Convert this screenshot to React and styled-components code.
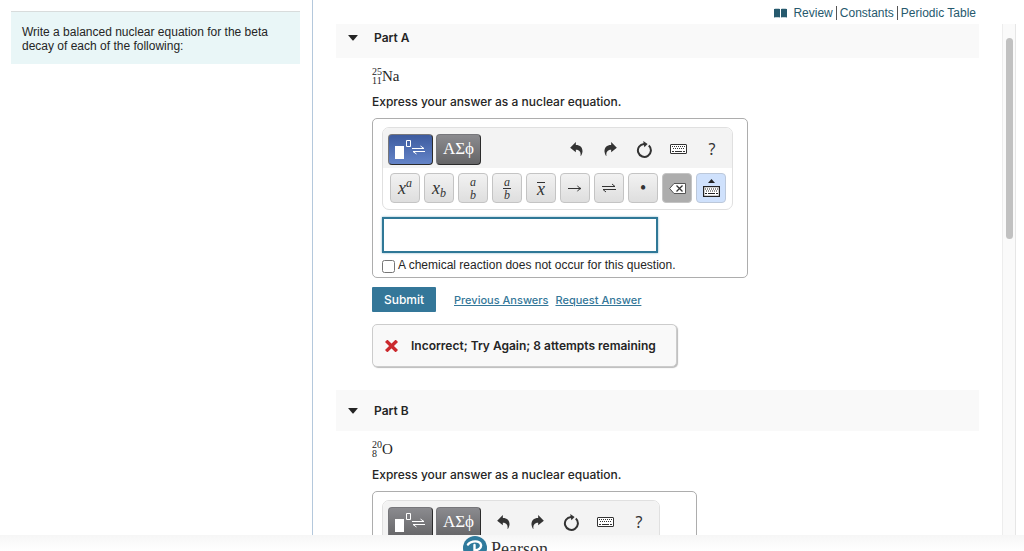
import React from 'react'
import styled, { createGlobalStyle } from 'styled-components'

const GlobalStyle = createGlobalStyle`
* {
  box-sizing: border-box;
}
body {
  margin: 0;
  background: #fff;
  color: #252525;
  font-family: Inter, "Liberation Sans", sans-serif;
  font-size: 12px;
  overflow: hidden;
}
`
const Page = styled.div`
display: flex;
flex-direction: column;
height: 100vh;
`
const Columns = styled.div`
display: flex;
flex: 1;
min-height: 0;
`
const Sidebar = styled.aside`
flex: 0 0 313px;
padding: 11px 12px 0 11px;
border-right: 1px solid #b4c8dc;
`
const Prompt = styled.p`
margin: 0;
padding: 13px 11px 11px;
border-top: 1px solid #d8dcdc;
background: #e9f6f7;
font-family: "Liberation Sans", Arial, sans-serif;
font-size: 12px;
line-height: 14px;
`
const Main = styled.main`
display: flex;
flex: 1;
flex-direction: column;
min-width: 0;
`
const Resources = styled.nav`
display: flex;
flex: 0 0 24px;
align-items: center;
justify-content: flex-end;
padding: 2px 48px 0 0;
font-family: "Liberation Sans", Arial, sans-serif;
font-size: 12px;

svg {
  margin-right: 6px;
}
`
const ResourceLink = styled.a`
color: #26596d;
line-height: 14px;
text-decoration: none;

& + & {
  margin-left: 3px;
  padding-left: 3px;
  border-left: 1px solid #555;
}
`
const ScrollArea = styled.div`
display: flex;
flex: 1;
min-height: 0;
overflow: hidden;
`
// the list is scrolled down by a few pixels
const Parts = styled.div`
flex: 1;
min-width: 0;
margin: -7px 23px 0;
`
const Track = styled.div`
flex: 0 0 14px;
margin-right: 8px;
padding: 14px 2px 0 3px;
border-left: 1px solid #ededed;
border-right: 1px solid #e6e6e6;
background: #fafafa;
`
const Thumb = styled.div`
width: 7px;
height: 201px;
border-radius: 4px;
background: #c1c1c1;
`
const Part = styled.section`
margin-bottom: 23px;
`
const PartHeader = styled.header`
display: flex;
align-items: center;
gap: 16px;
height: 41px;
padding-left: 12px;
background: #f9f9f9;
`
const PartTitle = styled.h2`
margin: 0;
font-size: 12px;
font-weight: 600;
`
const PartBody = styled.div`
padding: 9px 0 0 36px;
`
const Nuclide = styled.div`
display: flex;
align-items: center;
height: 18px;
font-family: "Liberation Serif", "Times New Roman", serif;
font-size: 15px;
`
const Numbers = styled.span`
display: flex;
flex-direction: column;
font-size: 10px;
line-height: 9px;
`
const Instruction = styled.p`
margin: 9px 0 8px;
font-size: 12px;
font-weight: 500;
line-height: 16px;
`
const AnswerBox = styled.div`
width: fit-content;
padding: 8px ${(p) => (p.$wide ? 14 : 36)}px 4px 9px;
border: 1px solid #adadad;
border-radius: 5px;
`
const Editor = styled.div`
width: fit-content;
border: 1px solid #e0e0e0;
border-radius: 7px;
overflow: hidden;
`
const Toolbar = styled.div`
display: flex;
align-items: center;
gap: 3px;
height: 40px;
padding: 2px 3px 0 5px;
background: #f3f3f3;
`
const Tools = styled.div`
display: flex;
margin-left: ${(p) => (p.$wide ? 75 : 2)}px;
`
const ToolButton = styled.button`
display: flex;
align-items: center;
justify-content: center;
width: 34px;
height: 30px;
padding: 0;
border: none;
background: none;
color: #333;
font-family: "Noto Sans", sans-serif;
font-size: 16px;
`
const ModeButton = styled.button`
display: flex;
align-items: center;
justify-content: center;
width: 45px;
height: 31px;
padding: 0;
border: 1px solid #444;
border-radius: 4px;
border-color: #77777b #2b2b2b #2b2b2b #77777b;
background: ${(p) => (p.$active ? 'linear-gradient(#3d5b9f, #6484c8)' : 'linear-gradient(#8b8b8f, #656567)')};
color: #fff;
font-family: "Liberation Serif", "Times New Roman", serif;
font-size: 17px;
`
const Keys = styled.div`
display: flex;
gap: 4px;
padding: 5px 6px 6px 7px;
`
const keyColors = {
  plain: 'linear-gradient(#f2f2f2, #dedede)',
  dark: '#adadad',
  blue: '#cfe1fc',
}
const Key = styled.button`
display: flex;
align-items: center;
justify-content: center;
width: 30px;
height: 30px;
padding: 0;
border: 1px solid ${(p) => (p.$kind === 'blue' ? '#bcc8da' : '#c4c4c4')};
border-radius: 4px;
background: ${(p) => keyColors[p.$kind || 'plain']};
color: #333;
font-family: "Liberation Serif", "Times New Roman", serif;
font-size: 18px;
font-style: italic;
line-height: 18px;

sup, sub {
  font-size: 12px;
  line-height: 12px;
}
sup {
  align-self: flex-start;
  margin-top: 3px;
}
sub {
  align-self: flex-end;
  margin-bottom: 3px;
}
`
const Stack = styled.span`
display: flex;
flex-direction: column;
font-size: 12px;
line-height: 10px;

span + span {
  padding: 1px 1px 0;
  border-top: 1px solid ${(p) => (p.$bar ? '#333' : 'transparent')};
}
span:first-child {
  padding-bottom: 1px;
}
`
const Mean = styled.span`
border-top: 1px solid #333;
line-height: 12px;
`
const AnswerInput = styled.input`
display: block;
width: 276px;
height: 36px;
margin-top: 7px;
padding: 0 8px;
border: 2px solid #2f7897;
background: #fff;
box-shadow: 0 0 2px #7fb2c8;
font-size: 14px;
outline: none;
`
const NoReaction = styled.label`
display: flex;
align-items: flex-end;
gap: 3px;
height: 20px;
font-family: "Liberation Sans", Arial, sans-serif;
font-size: 12px;
line-height: 16px;

input {
  width: 13px;
  height: 13px;
  margin: 0;
}
`
const Actions = styled.div`
display: flex;
align-items: center;
margin: 9px 0 12px;
`
const Submit = styled.button`
width: 64px;
height: 25px;
margin-right: 18px;
padding: 0;
border: none;
border-radius: 1px;
background: #347799;
color: #fff;
font-family: inherit;
font-size: 12px;
font-weight: 500;
`
const ActionLink = styled.a`
margin-right: 7px;
color: #347799;
font-size: 11px;
font-weight: 500;
text-underline-offset: 1px;
`
const Feedback = styled.div`
display: flex;
align-items: center;
gap: 13px;
width: fit-content;
height: 43px;
padding: 0 20px 0 12px;
border: 1px solid #ccc;
border-radius: 5px;
background: #f9f9f9;
box-shadow: 1px 1px 1px #bbb;
font-size: 12px;
font-weight: 600;
`
const Footer = styled.footer`
display: flex;
flex: 0 0 16px;
align-items: flex-start;
gap: 4px;
padding-left: 463px;
overflow: hidden;
background: linear-gradient(#f6f6f6, #fff);
color: #333;
font-family: "Liberation Serif", "Times New Roman", serif;
font-size: 18px;
line-height: 28px;

svg {
  flex: none;
  margin-top: 1px;
}
`

const BookIcon = () => (
  <svg width="13" height="10" viewBox="0 0 13 10">
    <path d="M0 1C2 0.5 5 0.5 6 1V9.5C5 9 2 9 0 9.5ZM7 1C8 0.5 11 0.5 13 1V9.5C11 9 8 9 7 9.5Z" fill="#26596d" />
  </svg>
)

const Caret = () => (
  <svg width="10" height="6" viewBox="0 0 10 6">
    <path d="M0.5 0H9.5Q10 0 9.6 0.6L5.6 5.2Q5 5.8 4.4 5.2L0.4 0.6Q0 0 0.5 0Z" fill="#252525" />
  </svg>
)

const TemplateIcon = () => (
  <svg width="31" height="21" viewBox="0 0 31 21" fill="none" stroke="#fff">
    <path d="M0 7H9V20H0Z" fill="#fff" stroke="none" />
    <path d="M11.5 1.5H15.5V7.5H11.5Z" />
    <path d="M17 9.5H29L25.5 7M30 12.5H18L21.5 15" />
  </svg>
)

const BentArrow = ({ flip }) => (
  <svg width="13" height="14" viewBox="0 0 38 42">
    <path
      d="M0 17L17 0V9C30 9 38 17 37 29C36 35 33 42 31 42C33 30 28 23 17 23V31Z"
      fill="#333"
      transform={flip ? 'matrix(-1 0 0 1 38 0)' : undefined}
    />
  </svg>
)

const ResetIcon = () => (
  <svg width="16" height="17" viewBox="0 0 16 17">
    <path d="M12.8 4.6A6.5 6.5 0 1 1 8 2.9" fill="none" stroke="#333" strokeWidth="2" />
    <path d="M7.2 0L11.6 2.9L8.4 6.2Z" fill="#333" />
  </svg>
)

const KeyboardIcon = () => (
  <svg width="17" height="10" viewBox="0 0 17 10" fill="none" stroke="#333">
    <rect x="0.5" y="0.5" width="16" height="9" rx="0.5" fill="#fff" />
    <path d="M2 2.5H15M3 4.5H15" strokeDasharray="1 1" />
    <path d="M2 7.5H4M5 7.5H12M13 7.5H15" />
  </svg>
)

const ArrowIcon = () => (
  <svg width="14" height="8" viewBox="0 0 14 8" fill="none" stroke="#333">
    <path d="M0 4.5H12.5" />
    <path d="M9.5 1.7Q10.5 4 13 4.5Q10.5 5 9.5 7.3" />
  </svg>
)

const EquilibriumIcon = () => (
  <svg width="14" height="10" viewBox="0 0 14 10" fill="none" stroke="#333">
    <path d="M0 3.5H13L10 1M14 6.5H1L4 9" />
  </svg>
)

const DeleteIcon = () => (
  <svg width="17" height="11" viewBox="0 0 17 11" fill="none" stroke="#333">
    <path d="M5 0.5H16.5V10.5H5L0.7 5.5Z" fill="#fff" stroke="#555" />
    <path d="M7.5 2.5L13.5 8.5M13.5 2.5L7.5 8.5" strokeWidth="1.3" />
  </svg>
)

const KeyboardUpIcon = () => (
  <svg width="17" height="18" viewBox="0 0 17 18" fill="none" stroke="#222">
    <path d="M5 4L8.5 0L12 4Z" fill="#222" stroke="none" />
    <rect x="0.6" y="7.6" width="15.8" height="9.8" fill="#fff" strokeWidth="1.2" />
    <path d="M2 10H15M3 12H15" strokeDasharray="1 1" />
    <path d="M2 14.5H4M5 14.5H12M13 14.5H15" />
  </svg>
)

const WrongIcon = () => (
  <svg width="13" height="12" viewBox="0 0 13 12">
    <path d="M2.4 2L10.6 10M10.6 2L2.4 10" stroke="#cb2a2e" strokeWidth="3.4" strokeLinecap="square" />
  </svg>
)

const PearsonMark = () => (
  <svg width="24" height="24" viewBox="0 0 24 24" fill="none">
    <circle cx="12" cy="12" r="12" fill="#2f7a9c" />
    <path
      d="M5 8.5C8 4.5 17 4 18 9C18.6 12.5 14.5 14.5 11.5 14M11.5 9V19"
      stroke="#fff"
      strokeWidth="2.4"
      strokeLinecap="round"
    />
  </svg>
)

const EditorToolbar = ({ wide }) => (
  <Toolbar>
    <ModeButton $active={wide} aria-label="Templates"><TemplateIcon /></ModeButton>
    <ModeButton>ΑΣϕ</ModeButton>
    <Tools $wide={wide}>
      <ToolButton aria-label="Undo"><BentArrow /></ToolButton>
      <ToolButton aria-label="Redo"><BentArrow flip /></ToolButton>
      <ToolButton aria-label="Reset"><ResetIcon /></ToolButton>
      <ToolButton aria-label="Keyboard"><KeyboardIcon /></ToolButton>
      <ToolButton>?</ToolButton>
    </Tools>
  </Toolbar>
)

const PartSection = ({ title, mass, number, symbol, children }) => (
  <Part>
    <PartHeader>
      <Caret />
      <PartTitle>{title}</PartTitle>
    </PartHeader>
    <PartBody>
      <Nuclide>
        <Numbers>
          <span>{mass}</span>
          <span>{number}</span>
        </Numbers>
        {symbol}
      </Nuclide>
      <Instruction>Express your answer as a nuclear equation.</Instruction>
      {children}
    </PartBody>
  </Part>
)

const App = () => {
  return (
    <Page>
      <GlobalStyle />
      <Columns>
        <Sidebar>
          <Prompt>Write a balanced nuclear equation for the beta decay of each of the following:</Prompt>
        </Sidebar>
        <Main>
          <Resources>
            <BookIcon />
            <ResourceLink href="#review">Review</ResourceLink>
            <ResourceLink href="#constants">Constants</ResourceLink>
            <ResourceLink href="#table">Periodic Table</ResourceLink>
          </Resources>
          <ScrollArea>
            <Parts>
              <PartSection title="Part A" mass="25" number="11" symbol="Na">
                <AnswerBox $wide>
                  <Editor>
                    <EditorToolbar wide />
                    <Keys>
                      <Key>x<sup>a</sup></Key>
                      <Key>x<sub>b</sub></Key>
                      <Key><Stack><span>a</span><span>b</span></Stack></Key>
                      <Key><Stack $bar><span>a</span><span>b</span></Stack></Key>
                      <Key><Mean>x</Mean></Key>
                      <Key aria-label="Arrow"><ArrowIcon /></Key>
                      <Key aria-label="Equilibrium"><EquilibriumIcon /></Key>
                      <Key>•</Key>
                      <Key $kind="dark" aria-label="Delete"><DeleteIcon /></Key>
                      <Key $kind="blue" aria-label="Hide keys"><KeyboardUpIcon /></Key>
                    </Keys>
                  </Editor>
                  <AnswerInput type="text" aria-label="Answer" />
                  <NoReaction>
                    <input type="checkbox" />
                    <span>A chemical reaction does not occur for this question.</span>
                  </NoReaction>
                </AnswerBox>
                <Actions>
                  <Submit>Submit</Submit>
                  <ActionLink href="#previous">Previous Answers</ActionLink>
                  <ActionLink href="#request">Request Answer</ActionLink>
                </Actions>
                <Feedback>
                  <WrongIcon />
                  Incorrect; Try Again; 8 attempts remaining
                </Feedback>
              </PartSection>
              <PartSection title="Part B" mass="20" number="8" symbol="O">
                <AnswerBox>
                  <Editor>
                    <EditorToolbar />
                  </Editor>
                </AnswerBox>
              </PartSection>
            </Parts>
            <Track>
              <Thumb />
            </Track>
          </ScrollArea>
        </Main>
      </Columns>
      <Footer>
        <PearsonMark />
        Pearson
      </Footer>
    </Page>
  )
}

export default App
